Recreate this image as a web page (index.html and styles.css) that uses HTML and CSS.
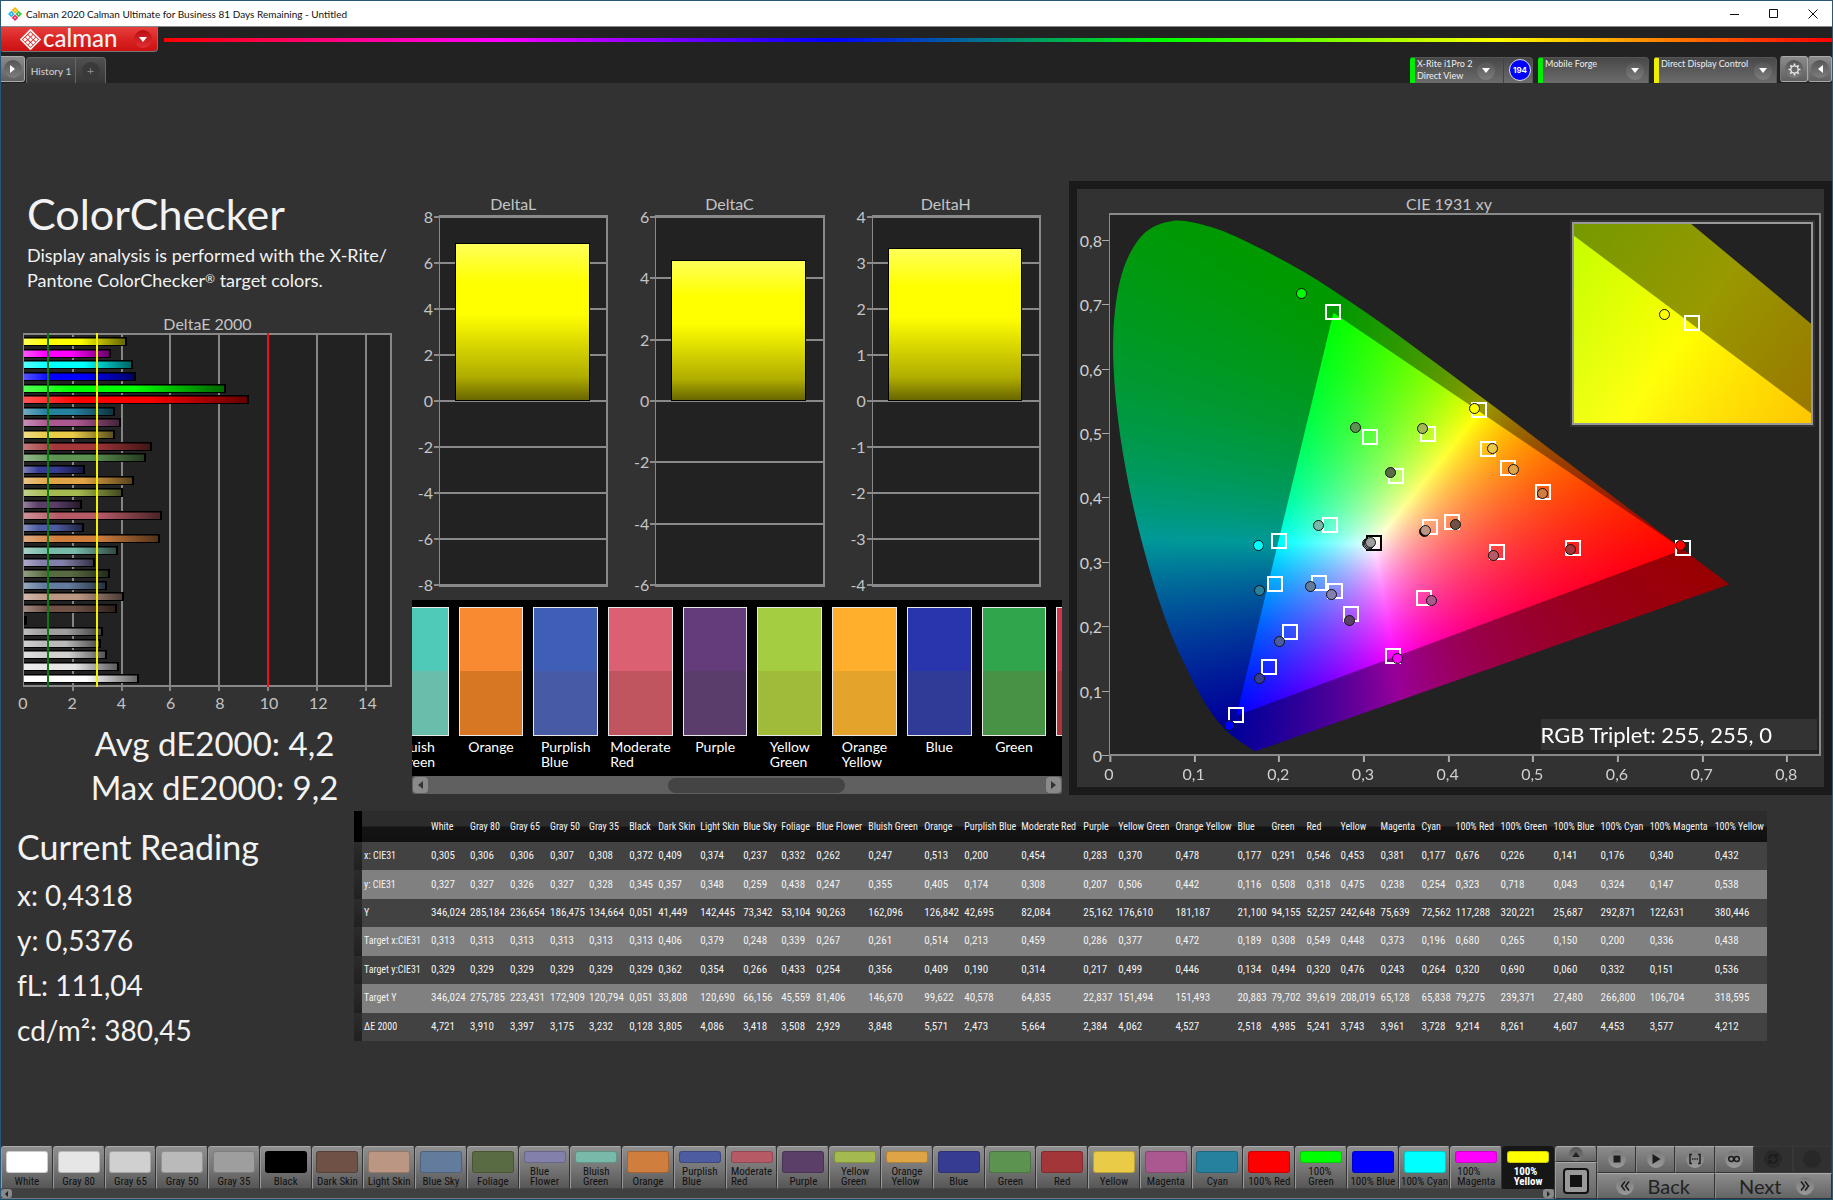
FILE: index.html
```html
<!DOCTYPE html>
<html lang="en">
<head>
<meta charset="utf-8">
<meta name="viewport" content="width=device-width, initial-scale=1">
<title>Calman 2020 Calman Ultimate for Business 81 Days Remaining - Untitled</title>
<link rel="stylesheet" href="styles.css">
</head>
<body>
<div class="titlebar">
  <svg class="app-icon" viewBox="0 0 14 14" width="14" height="14" aria-hidden="true">
    <path d="M7 0l3.300 3.300L7 6.600 3.700 3.300z" fill="#f9b800"/><path d="M3.300 3.700L6.600 7l-3.300 3.300L0 7z" fill="#1fb5ee"/>
    <path d="M10.700 3.700L14 7l-3.300 3.300L7.400 7z" fill="#3cc13b"/><path d="M7 7.400l3.300 3.300L7 14l-3.300-3.300z" fill="#ee2a62"/>
    <path d="M7 2.400l.9.9-.9.900-.9-.9zM3.300 6.100l.9.900-.9.900-.9-.9zM10.700 6.100l.9.900-.9.900-.9-.9zM7 9.800l.9.900-.9.900-.9-.9z" fill="#fff"/>
  </svg>
  <span class="window-title">Calman 2020 Calman Ultimate for Business 81 Days Remaining - Untitled</span>
  <div class="window-controls">
    <button aria-label="Minimize"><svg viewBox="0 0 10 10" width="10" height="10"><path d="M0 5.500h9"/></svg></button>
    <button aria-label="Maximize"><svg viewBox="0 0 10 10" width="10" height="10"><path d="M.5.500h8v8h-8z"/></svg></button>
    <button aria-label="Close"><svg viewBox="0 0 10 10" width="10" height="10"><path d="M.5.500l9 9M9.500.500l-9 9"/></svg></button>
  </div>
</div>

<header class="app-header">
  <div class="brand-row">
    <button class="brand" aria-label="calman menu">
      <svg viewBox="0 0 20 20" width="21" height="21" aria-hidden="true">
        <path d="M10 .8l9.200 9.200-9.200 9.200L.8 10z" fill="none" stroke="#fff" stroke-width="1.500" stroke-linejoin="round"/>
        <path d="M10 3.200l2 2-2 2-2-2zM7.400 5.800l2 2-2 2-2-2zM12.600 5.800l2 2-2 2-2-2zM4.800 8.200l2 2-2 2-2-2zM10 8.200l2 2-2 2-2-2zM15.200 8.200l2 2-2 2-2-2zM7.400 10.800l2 2-2 2-2-2zM12.600 10.800l2 2-2 2-2-2zM10 13.200l2 2-2 2-2-2z" fill="#fff"/>
      </svg>
      <span class="wordmark">calman</span>
      <span class="round round-red"><i class="tri tri-down"></i></span>
    </button>
    <div class="rainbow"></div>
  </div>
  <div class="tab-row">
    <button class="square-btn" aria-label="Expand left panel"><span class="round"><i class="tri tri-right"></i></span></button>
    <nav class="tabs">
      <button class="tab">History 1</button>
      <button class="tab tab-add" aria-label="Add tab"><span class="round round-dim">+</span></button>
    </nav>
    <div class="devices">
      <div class="device device-meter">
        <button class="device-name">X-Rite i1Pro 2<br>Direct View</button>
        <span class="round"><i class="tri tri-down"></i></span>
        <span class="badge-cell"><span class="badge">194</span></span>
      </div>
      <div class="device device-source">
        <button class="device-name">Mobile Forge</button>
        <span class="round"><i class="tri tri-down"></i></span>
      </div>
      <div class="device device-display">
        <button class="device-name">Direct Display Control</button>
        <span class="round"><i class="tri tri-down"></i></span>
      </div>
      <button class="square-btn settings" aria-label="Settings"><span class="round">
        <svg viewBox="0 0 14 14" width="13" height="13"><circle cx="7" cy="7" r="4" fill="none" stroke="#eee" stroke-width="1.400"/><path d="M7 .6v2M7 11.400v2M.6 7h2M11.400 7h2M2.500 2.500l1.400 1.400M10.100 10.100l1.400 1.400M2.500 11.500l1.400-1.400M10.100 3.900l1.400-1.400" stroke="#eee" stroke-width="1.800"/></svg>
      </span></button>
      <button class="square-btn" aria-label="Collapse right panel"><span class="round"><i class="tri tri-left"></i></span></button>
    </div>
  </div>
</header>

<main class="stage">
  <div class="overview">
    <section class="summary">
      <h1>ColorChecker</h1>
      <p class="lead">Display analysis is performed with the X-Rite/<br>Pantone ColorChecker<span class="reg">®</span> target colors.</p>
      <h2 class="chart-title">DeltaE 2000</h2>
      <div class="de-plot" id="de-plot"></div>
      <div class="de-axis" id="de-axis"></div>
      <div class="totals">
        <p>Avg dE2000: 4,2</p>
        <p>Max dE2000: 9,2</p>
      </div>
    </section>

    <section class="center">
      <div class="deltas" id="deltas"></div>
      <div class="strip">
        <div class="strip-view"><ul class="strip-list" id="strip"></ul></div>
        <div class="hscroll">
          <button aria-label="Scroll left"><i class="tri tri-left"></i></button>
          <div class="hscroll-track"><div class="hscroll-thumb"></div></div>
          <button aria-label="Scroll right"><i class="tri tri-right"></i></button>
        </div>
      </div>
    </section>

    <section class="cie">
      <h2 class="chart-title">CIE 1931 xy</h2>
      <div class="cie-grid">
        <div class="cie-y" id="cie-y"></div>
        <div class="cie-plot">
          <canvas id="cie-canvas"></canvas>
          <div class="marks" id="cie-marks"></div>
          <div class="inset"><canvas id="inset-canvas"></canvas><div class="marks" id="inset-marks"></div></div>
          <p class="triplet">RGB Triplet: 255, 255, 0</p>
        </div>
        <div class="cie-x" id="cie-x"></div>
      </div>
    </section>
  </div>

  <div class="readings">
    <section class="current">
      <h2>Current Reading</h2>
      <p>x: 0,4318</p>
      <p>y: 0,5376</p>
      <p>fL: 111,04</p>
      <p>cd/m²: 380,45</p>
    </section>
    <table class="data" id="data"></table>
  </div>
</main>

<footer class="dock">
  <div class="patches">
    <div class="patch-list" id="patches"></div>
    <div class="thin-scroll">
      <button aria-label="Previous patches"><i class="tri tri-left"></i></button>
      <span></span>
      <button aria-label="Next patches"><i class="tri tri-right"></i></button>
    </div>
  </div>
  <div class="pattern">
    <button class="pattern-up" aria-label="Show pattern options"><span class="round"><i class="tri tri-up"></i></span></button>
    <button class="pattern-window" aria-label="Pattern window"><span></span></button>
  </div>
  <div class="transport">
    <div class="transport-row">
      <button aria-label="Stop"><span class="round"><svg viewBox="0 0 12 12" width="12" height="12"><path d="M2.500 2.500h7v7h-7z"/></svg></span></button>
      <button aria-label="Play"><span class="round"><svg viewBox="0 0 12 12" width="12" height="12"><path d="M2.500 1l8 5-8 5z"/></svg></span></button>
      <button aria-label="Read series"><span class="round"><svg class="line" viewBox="0 0 12 12" width="12" height="12"><path d="M3 1.500H1v9h2M9 1.500h2v9H9M3 6h1.400M5.300 6h1.400M7.600 6H9"/></svg></span></button>
      <button aria-label="Read continuously"><span class="round"><svg class="line" viewBox="0 0 14 12" width="14" height="12"><circle cx="4.200" cy="6" r="2.500"/><circle cx="9.800" cy="6" r="2.500"/></svg></span></button>
      <button aria-label="Repeat" disabled><span class="round"><svg class="line" viewBox="0 0 12 12" width="12" height="12"><path d="M2 6a4 4 0 0 1 7-2.600M10 6a4 4 0 0 1-7 2.600"/><path d="M9.800 1v3H7M2.200 11V8H5"/></svg></span></button>
      <button aria-label="Unavailable" disabled><span class="round"></span></button>
    </div>
    <div class="nav-row">
      <button class="nav-back"><span class="round"><svg class="line" viewBox="0 0 12 12" width="12" height="12"><path d="M6 1.500L2.500 6 6 10.500M10 1.500L6.500 6l3.500 4.500"/></svg></span>Back</button>
      <button class="nav-next">Next<span class="round"><svg class="line" viewBox="0 0 12 12" width="12" height="12"><path d="M2 1.500L5.500 6 2 10.500M6 1.500L9.500 6 6 10.500"/></svg></span></button>
    </div>
  </div>
</footer>
<script src="script.js"></script>
</body>
</html>
```
FILE: styles.css
```css
* { box-sizing: border-box; margin: 0; padding: 0; }
body {
  min-height: 100vh;
  display: flex;
  flex-direction: column;
  background: #323232;
  color: #f2f2f2;
  font: 16px/20px Lato, "Open Sans", sans-serif;
  border: 1px solid #2b5876;
  border-bottom-color: #14506a;
  overflow-x: hidden;
}
button { font: inherit; color: inherit; border: 0; background: none; }
svg { display: block; }
ul { list-style: none; }

/* Shared round glyph holders and triangles */
.round {
  flex: none;
  display: flex;
  align-items: center;
  justify-content: center;
  width: 18px;
  height: 18px;
  border-radius: 50%;
  background: linear-gradient(#555, #7d7d7d);
}
.tri { flex: none; width: 0; height: 0; border: 4px solid transparent; }
.tri-down { border-top: 5px solid #fff; border-bottom: 0; }
.tri-up { border-bottom: 5px solid #222; border-top: 0; }
.tri-right { border-left: 5px solid #fff; border-right: 0; }
.tri-left { border-right: 5px solid #fff; border-left: 0; }

/* Window title bar */
.titlebar {
  display: flex;
  align-items: center;
  height: 26px;
  padding-left: 7px;
  background: #fff;
  color: #111;
  border-bottom: 1px solid #8a8a8a;
}
.window-title { margin-left: 4px; font-size: 10px; line-height: 20px; }
.window-controls { display: flex; margin-left: auto; }
.window-controls button { width: 39px; height: 24px; display: flex; align-items: center; justify-content: center; }
.window-controls path { fill: none; stroke: #111; }

/* Application header */
.app-header { background: #222; }
.brand-row { display: flex; align-items: center; height: 26px; }
.brand {
  align-self: flex-start;
  display: flex;
  align-items: center;
  width: 157px;
  height: 25px;
  padding: 0 5px 0 19px;
  background: linear-gradient(#e5403d, #d81f1f 60%, #cc1212);
  border-bottom: 1px solid #777;
  border-right: 1px solid #777;
  border-radius: 0 0 4px 2px;
}
.wordmark { margin-left: 2px; font-size: 24px; line-height: 20px; font-weight: 500; padding-bottom: 3px; }
.round-red { margin-left: auto; background: linear-gradient(#b90f12, #e03034); }
.rainbow {
  flex: 1;
  height: 4px;
  margin: 0 0 0 6px;
  background: linear-gradient(90deg, #f00, #f0f, #00f, #0f0, #ff0, #f00);
}
.tab-row { display: flex; align-items: flex-end; height: 30px; }
.square-btn {
  display: flex;
  align-items: center;
  justify-content: center;
  width: 24px;
  height: 26px;
  margin-bottom: 1px;
  background: linear-gradient(#8b8b8b, #606060);
  border: 1px solid #aaa;
  border-left-color: #777;
  border-radius: 3px;
}
.square-btn:first-child { border-left: 0; border-radius: 0 3px 3px 0; }
.settings { width: 28px; }
.tabs { display: flex; margin-left: 1px; }
.tab {
  height: 26px;
  width: 50px;
  font-size: 10px;
  font-weight: 500;
  color: #ccc;
  background: linear-gradient(#505050, #363636);
  border: 1px solid #666;
  border-bottom: 0;
  border-radius: 4px 0 0 0;
}
.tab-add { width: 30px; border-radius: 0 4px 0 0; display: flex; align-items: center; justify-content: center; border-left: 0; }
.round-dim { background: #3a3a3a; color: #888; font-size: 12px; }
.devices { display: flex; margin-left: auto; align-items: flex-end; }
.device {
  display: flex;
  align-items: center;
  height: 26px;
  margin-right: 5px;
  padding-right: 4px;
  font-size: 9px;
  line-height: 12px;
  color: #eee;
  background: linear-gradient(#484848, #6c6c6c);
  border: 1px solid #555;
  border-width: 1px 1px 0 5px;
  border-radius: 3px 4px 0 0;
}
.device-name { flex: 1; align-self: flex-start; text-align: left; padding-left: 2px; white-space: nowrap; }
.device-meter { width: 123px; border-left-color: #0e0; padding-right: 0; }
.device-source { width: 111px; border-left-color: #0e0; }
.device-display { width: 123px; border-left-color: #ee0; margin-right: 3px; }
.badge-cell { height: 25px; margin-left: 8px; padding: 1px 1px 0 5px; border-left: 1px solid #444; }
.badge {
  display: block;
  width: 22px;
  height: 22px;
  border: 1px solid #ddd;
  border-radius: 50%;
  background: #00f;
  color: #fff;
  font: bold 8px/20px Inter, sans-serif;
  text-align: center;
}

/* Main stage */
.stage { flex: 1; padding-top: 98px; }
.overview { display: grid; grid-template-columns: 403fr 658fr 770fr; }
.chart-title { font-size: 16px; line-height: 19px; font-weight: 400; color: #c4c4c4; text-align: center; }
.summary { padding: 7px 12px 2px 22px; }
.summary h1 { margin-left: 4px; font-size: 43px; line-height: 52px; font-weight: 400; white-space: nowrap; }
.lead { margin: 3px 0 21px 4px; font-size: 18px; line-height: 25px; white-space: nowrap; }
.reg { font-size: 12px; line-height: 12px; vertical-align: 4px; }

.de-plot { position: relative; height: 354px; padding: 1px 0; background: #222; border: 2px solid #888; border-left-width: 1px; display: flex; flex-direction: column; }
.de-row { flex: 1; display: flex; align-items: center; z-index: 1; }
.de-bar { height: 9px; border: 1px solid #000; border-width: 1px 2px 1px 0; box-shadow: inset 0 1px 0 #0008; }
.de-line { position: absolute; top: 0; bottom: 0; width: 2px; margin-left: -1px; background: #858585; }
.de-line.tick { bottom: -6px; }
.limit { z-index: 2; top: -2px; bottom: -2px; }
.limit-low { background: #0a7a12; }
.limit-mid { background: #f1f100; }
.limit-high { background: #f01018; }
.de-axis { position: relative; height: 26px; }
.de-axis span { position: absolute; top: 6px; transform: translateX(-50%); color: #c4c4c4; }
.totals { margin-top: 8px; padding-left: 14px; text-align: center; font-size: 33px; line-height: 44px; white-space: nowrap; }

.deltas { display: grid; grid-template-columns: repeat(3, 1fr); padding: 13px 8px 0 1px; }
.delta-plot { position: relative; height: 372px; margin: 2px 13px 0 34px; background: #222; border: 2px solid #8a8a8a; border-left-width: 1px; }
.delta-line { position: absolute; left: -6px; right: 0; height: 2px; margin-top: -1px; background: #8a8a8a; }
.delta-label { position: absolute; right: 100%; margin: -10px 7px 0 0; color: #c4c4c4; }
.delta-bar {
  position: absolute;
  left: 9%;
  right: 10%;
  border: 1px solid #000;
  background: linear-gradient(#ffff58, #ff0 25%, #ff0 45%, #b0ad00 85%, #686600);
}

.strip { margin: 13px 0 0 8px; }
.strip-view { height: 176px; padding-top: 7px; background: #000; overflow: hidden; }
.strip-list { display: grid; grid-template-columns: repeat(10, 1fr); gap: 10px; margin: 0 -59px 0 -28px; }
.strip-list li { display: flex; flex-direction: column; align-items: center; gap: 3px; font-size: 14px; line-height: 15px; color: #fff; }
.strip-color { width: 100%; height: 129px; border: 1px solid #e8e8e8; }
.hscroll { display: flex; align-items: center; height: 18px; padding: 1px; background: #606060; border-radius: 3px; }
.hscroll button { width: 15px; height: 16px; display: flex; align-items: center; justify-content: center; background: #8a8a8a; border-radius: 4px; }
.hscroll .tri-left { border-right-color: #333; }
.hscroll .tri-right { border-left-color: #333; }
.hscroll-track { flex: 1; padding: 0 31% 0 37%; }
.hscroll-thumb { height: 15px; border-radius: 8px; background: #444; }

/* Chromaticity diagram */
.cie { align-self: start; margin-left: 7px; padding: 5px 3px 3px 0; border: 8px solid #1a1a1a; }
.cie-grid { display: grid; grid-template-columns: 32px 1fr; }
.cie-y, .cie-x { position: relative; color: #d0d0d0; }
.cie-x { grid-column: 2; height: 28px; }
.cie-y span { position: absolute; right: 7px; margin-bottom: -10px; }
.cie-y span::after { content: ""; position: absolute; left: 100%; top: 9px; width: 7px; height: 1px; background: #aaa; }
.cie-x span { position: absolute; top: 8px; transform: translateX(-50%); }
.cie-x span::before { content: ""; position: absolute; left: 50%; top: -8px; width: 2px; height: 6px; background: #aaa; }
.cie-plot { position: relative; height: 543px; background: #222; border: 2px solid #8a8a8a; border-left-width: 1px; }
.cie-plot canvas { position: absolute; left: 0; top: 0; width: 100%; height: 100%; display: block; }
.marks { position: absolute; inset: 0; }
.target, .measured { position: absolute; width: 16px; height: 16px; margin: 0 0 -7px -8px; border: 2px solid #fff; }
.target-white { border-color: #000; }
.measured { width: 11px; height: 11px; margin: 0 0 -4px -5px; border: 1px solid #111; border-radius: 50%; }
.inset { position: absolute; right: 6px; top: 7px; width: 34%; height: 203px; border: 2px solid #999; box-shadow: 0 0 0 2px #333; background: #222; overflow: hidden; }
.triplet { position: absolute; right: 2px; bottom: 4px; width: 39%; height: 31px; background: #333; color: #fff; font-size: 22px; line-height: 31px; white-space: nowrap; }

/* Lower readings */
.readings { display: grid; grid-template-columns: 353fr 1413fr 65fr; align-items: start; }
.current { padding: 13px 0 0 16px; font-size: 28px; line-height: 45px; white-space: nowrap; }
.current h2 { margin-bottom: 4px; font-size: 34px; line-height: 45px; font-weight: 400; }
.data { width: 100%; height: 230px; table-layout: fixed; border-collapse: collapse; font: 11px/14px "Roboto Condensed", Lato, sans-serif; white-space: nowrap; }
.data th, .data td { text-align: left; font-weight: inherit; padding: 0; }
.data thead tr { height: 31px; font-size: 10px; background: linear-gradient(#2c2c2c 48%, #141414 52%, #101010); }
.data tbody tr { background: #424242; }
.data tbody tr:nth-child(even) { background: #808080; }
.data td:first-child { background: linear-gradient(#2c2c2c, #202020); }
.data thead td:first-child { background: #000; }
.data tbody th { padding-left: 2px; font-size: 10px; }

/* Bottom dock */
.dock { display: flex; height: 53px; }
.patches { flex: 1; min-width: 0; display: flex; flex-direction: column; }
.patch-list { flex: 1; display: flex; }
.patch {
  flex: 1 1 0;
  min-width: 0;
  display: flex;
  flex-direction: column;
  align-items: center;
  gap: 4px;
  padding: 4px 0 1px;
  font: 11px/10px "Roboto Condensed", Lato, sans-serif;
  text-align: left;
  white-space: nowrap;
  color: #111;
  background: linear-gradient(#8e8e8e, #777 50%, #565656);
  border: 1px solid #999;
  border-color: #aaa #333 #444 #999;
  border-radius: 3px 3px 0 0;
}
.patch-color { flex: 1; width: 42px; border-radius: 3px; border: 1px solid #0003; }
.patch-active { background: #161616; border-color: #161616; color: #fff; font-weight: 700; }
.thin-scroll { display: flex; height: 10px; background: #404040; border-bottom: 1px solid #777; }
.thin-scroll span { flex: 1; }
.thin-scroll button { width: 11px; display: flex; align-items: center; justify-content: center; background: #888; border-radius: 3px; }
.thin-scroll .tri { border-width: 3px; border-left-color: transparent; border-right-color: transparent; }
.thin-scroll .tri-left { border-right-color: #222; border-left-width: 0; }
.thin-scroll .tri-right { border-left-color: #222; border-right-width: 0; }
.pattern { width: 42px; margin-left: 1px; display: flex; flex-direction: column; }
.pattern button { display: flex; align-items: center; justify-content: center; background: linear-gradient(#8a8a8a, #666); border: 1px solid #aaa; border-color: #aaa #333 #333 #999; }
.pattern-up { height: 16px; border-radius: 3px 3px 0 0; }
.pattern-up .round { width: 14px; height: 14px; }
.pattern-window { flex: 1; }
.pattern-window span { width: 26px; height: 26px; border: 2px solid #111; border-radius: 4px; background: linear-gradient(#111, #111) center / 12px 12px no-repeat #999; }
.transport { width: 235px; display: flex; flex-direction: column; }
.transport-row, .nav-row { flex: 1; display: flex; }
.transport button { flex: 1 1 0; min-width: 0; display: flex; align-items: center; justify-content: center; color: #222; background: linear-gradient(#8c8c8c, #646464); border: 1px solid #999; border-color: #aaa #333 #333 #888; }
.transport .round { background: linear-gradient(#787878, #9a9a9a); }
.transport button:disabled { background: #303030; border-color: #383838; }
.transport button:disabled .round { background: #282828; }
.transport svg { fill: #1c1c1c; }
.transport svg.line { fill: none; stroke: #1c1c1c; stroke-width: 1.5; }
.nav-row .nav-back { font-size: 20px; line-height: 22px; gap: 14px; padding-right: 6px; }
.nav-row .nav-next { font-size: 20px; line-height: 22px; gap: 14px; padding-left: 6px; }
```
FILE: script.js
```js
const patches = [
  // name, colour, x, y, Y, target x, target y, target Y, dE2000, table column width
  ["White", "#ffffff", "0,305", "0,327", "346,024", "0,313", "0,329", "346,024", "4,721", 39],
  ["Gray 80", "#e6e6e6", "0,306", "0,327", "285,184", "0,313", "0,329", "275,785", "3,910", 40],
  ["Gray 65", "#d0d0d0", "0,306", "0,326", "236,654", "0,313", "0,329", "223,431", "3,397", 40],
  ["Gray 50", "#bababa", "0,307", "0,327", "186,475", "0,313", "0,329", "172,909", "3,175", 39],
  ["Gray 35", "#9e9e9e", "0,308", "0,328", "134,664", "0,313", "0,329", "120,794", "3,232", 40],
  ["Black", "#000000", "0,372", "0,345", "0,051", "0,313", "0,329", "0,051", "0,128", 29],
  ["Dark Skin", "#6f5145", "0,409", "0,357", "41,449", "0,406", "0,362", "33,808", "3,805", 42],
  ["Light Skin", "#bb9682", "0,374", "0,348", "142,445", "0,379", "0,354", "120,690", "4,086", 43],
  ["Blue Sky", "#637b9c", "0,237", "0,259", "73,342", "0,248", "0,266", "66,156", "3,418", 38],
  ["Foliage", "#596b42", "0,332", "0,438", "53,104", "0,339", "0,433", "45,559", "3,508", 35],
  ["Blue Flower", "#8480ac", "0,262", "0,247", "90,263", "0,267", "0,254", "81,406", "2,929", 52],
  ["Bluish Green", "#78baa9", "0,247", "0,355", "162,096", "0,261", "0,356", "146,670", "3,848", 56],
  ["Orange", "#cf7e3e", "0,513", "0,405", "126,842", "0,514", "0,409", "99,622", "5,571", 40],
  ["Purplish Blue", "#4d5ba1", "0,200", "0,174", "42,695", "0,213", "0,190", "40,578", "2,473", 57],
  ["Moderate Red", "#b65b66", "0,454", "0,308", "82,084", "0,459", "0,314", "64,835", "5,664", 62],
  ["Purple", "#5b3f69", "0,283", "0,207", "25,162", "0,286", "0,217", "22,837", "2,384", 35],
  ["Yellow Green", "#a4ba50", "0,370", "0,506", "176,610", "0,377", "0,499", "151,494", "4,062", 57],
  ["Orange Yellow", "#dfa445", "0,478", "0,442", "181,187", "0,472", "0,446", "151,493", "4,527", 62],
  ["Blue", "#373c93", "0,177", "0,116", "21,100", "0,189", "0,134", "20,883", "2,518", 34],
  ["Green", "#5c9350", "0,291", "0,508", "94,155", "0,308", "0,494", "79,702", "4,985", 35],
  ["Red", "#a23639", "0,546", "0,318", "52,257", "0,549", "0,320", "39,619", "5,241", 34],
  ["Yellow", "#e9cb48", "0,453", "0,475", "242,648", "0,448", "0,476", "208,019", "3,743", 40],
  ["Magenta", "#ab5790", "0,381", "0,238", "75,639", "0,373", "0,243", "65,128", "3,961", 41],
  ["Cyan", "#26819f", "0,177", "0,254", "72,562", "0,196", "0,264", "65,838", "3,728", 34],
  ["100% Red", "#ff0000", "0,676", "0,323", "117,288", "0,680", "0,320", "79,275", "9,214", 45],
  ["100% Green", "#00ff00", "0,226", "0,718", "320,221", "0,265", "0,690", "239,371", "8,261", 53],
  ["100% Blue", "#0000ff", "0,141", "0,043", "25,687", "0,150", "0,060", "27,480", "4,607", 47],
  ["100% Cyan", "#00ffff", "0,176", "0,324", "292,871", "0,200", "0,332", "266,800", "4,453", 49],
  ["100% Magenta", "#ff00ff", "0,340", "0,147", "122,631", "0,336", "0,151", "106,704", "3,577", 65],
  ["100% Yellow", "#ffff00", "0,432", "0,538", "380,446", "0,438", "0,536", "318,595", "4,212", 52]
];
const num = s => parseFloat(s.replace(",", "."));
const byId = id => document.getElementById(id);

// DeltaE bar chart, axis 0 to 15
const AXIS = 15;
byId("de-plot").innerHTML =
  [2, 4, 6, 8, 10, 12, 14].map(v => `<i class="de-line tick" style="left:${v / AXIS * 100}%"></i>`).join("") +
  patches.slice().reverse().map(p => `<div class="de-row"><div class="de-bar" style="width:${num(p[8]) / AXIS * 100}%;background:linear-gradient(90deg,#fff5,#fff0 25%,#0000 55%,#0009),${p[1]}"></div></div>`).join("") +
  [["low", 1], ["mid", 3], ["high", 10]].map(([n, v]) => `<i class="de-line limit limit-${n}" style="left:${v / AXIS * 100}%"></i>`).join("");
byId("de-axis").innerHTML = [0, 2, 4, 6, 8, 10, 12, 14].map(v => `<span style="left:${v / AXIS * 100}%">${v}</span>`).join("");

// DeltaL, DeltaC and DeltaH
byId("deltas").innerHTML = [["DeltaL", 8, 2, 6.86], ["DeltaC", 6, 2, 4.61], ["DeltaH", 4, 1, 3.33]].map(([name, max, step, value]) => {
  let marks = "";
  for (let v = max; v >= -max; v -= step) {
    const top = (max - v) / (2 * max) * 100;
    marks += `<i class="delta-line" style="top:${top}%"></i><span class="delta-label" style="top:${top}%">${v}</span>`;
  }
  return `<section><h2 class="chart-title">${name}</h2><div class="delta-plot">${marks}<div class="delta-bar" style="top:${(max - value) / (2 * max) * 100}%;bottom:50%"></div></div></section>`;
}).join("");

// Measured over target swatches; the last one is only a sliver, so it carries no label
byId("strip").innerHTML = [
  ["Bluish<br>Green", "#4fcab8", "#68bdab"], ["Orange", "#f98a31", "#d87723"], ["Purplish<br>Blue", "#3f5eb5", "#465ba4"],
  ["Moderate<br>Red", "#db6072", "#c0545f"], ["Purple", "#653c7b", "#5b3d6b"], ["Yellow<br>Green", "#a4cd42", "#a0bb3a"],
  ["Orange<br>Yellow", "#ffaf2b", "#e4a32b"], ["Blue", "#2935ac", "#303a97"], ["Green", "#31a54b", "#479244"], ["", "#d0344a", "#b0333a"]
].map(([n, a, b]) => `<li><div class="strip-color" style="background:linear-gradient(${a} 50%,${b} 50%)"></div><span>${n}</span></li>`).join("");

// Data table
const rows = ["x: CIE31", "y: CIE31", "Y", "Target x:CIE31", "Target y:CIE31", "Target Y", "ΔE 2000"];
byId("data").innerHTML =
  `<colgroup><col style="width:8px"><col style="width:69px">${patches.map(p => `<col style="width:${p[9]}px">`).join("")}</colgroup>` +
  `<thead><tr><td></td><td></td>${patches.map(p => `<th scope="col">${p[0]}</th>`).join("")}</tr></thead><tbody>` +
  rows.map((r, i) => `<tr><td></td><th scope="row">${r}</th>${patches.map(p => `<td>${p[i + 2]}</td>`).join("")}</tr>`).join("") + "</tbody>";

// Patch selector
const wrapped = ["Blue Flower", "Bluish Green", "Purplish Blue", "Moderate Red", "Yellow Green", "Orange Yellow", "100% Green", "100% Magenta", "100% Yellow"];
byId("patches").innerHTML = patches.map((p, i) =>
  `<button class="patch${i === patches.length - 1 ? " patch-active" : ""}"><span class="patch-color" style="background:${p[1]}"></span><span>${wrapped.includes(p[0]) ? p[0].replace(" ", "<br>") : p[0]}</span></button>`).join("");

// Chromaticity diagram
const R = [0.68, 0.32], G = [0.265, 0.69], B = [0.15, 0.06], W = [0.3127, 0.329];
const locus = [[.1741, .005], [.1714, .0051], [.1689, .0069], [.1644, .0109], [.1566, .0177], [.144, .0297], [.1355, .0399], [.1241, .0578], [.1096, .0868], [.0913, .1327], [.0687, .2007], [.0454, .295], [.0235, .4127], [.0082, .5384], [.0039, .6548], [.0139, .7502], [.0389, .812], [.0743, .8338], [.1142, .8262], [.1547, .8059], [.2296, .7543], [.3016, .6923], [.3731, .6245], [.4441, .5547], [.5125, .4866], [.5752, .4242], [.627, .3725], [.6915, .3083], [.7347, .2653]];

function invert(m) {
  const [a, b, c, d, e, f, g, h, i] = m;
  const det = a * (e * i - f * h) - b * (d * i - f * g) + c * (d * h - e * g);
  return [e * i - f * h, c * h - b * i, b * f - c * e, f * g - d * i, a * i - c * g, c * d - a * f, d * h - e * g, b * g - a * h, a * e - b * d].map(v => v / det);
}
const xyz = (x, y) => [x, y, 1 - x - y];
const mul = (m, v) => [0, 3, 6].map(k => m[k] * v[0] + m[k + 1] * v[1] + m[k + 2] * v[2]);
const r = xyz(...R), g = xyz(...G), b = xyz(...B);
const toPrimaries = invert([r[0], g[0], b[0], r[1], g[1], b[1], r[2], g[2], b[2]]);
const white = mul(toPrimaries, xyz(...W).map(v => v / W[1]));

function drawDiagram(canvas, x0, x1, y0, y1) {
  const w = canvas.width = canvas.clientWidth, h = canvas.height = canvas.clientHeight;
  const ctx = canvas.getContext("2d");
  const px = (x, y) => [(x - x0) / (x1 - x0) * w, (y1 - y) / (y1 - y0) * h];
  const layer = gain => {
    const off = document.createElement("canvas");
    off.width = w; off.height = h;
    const octx = off.getContext("2d"), img = octx.createImageData(w, h);
    for (let j = 0, k = 0; j < h; j++) for (let i = 0; i < w; i++, k += 4) {
      const c = mul(toPrimaries, xyz(x0 + i / w * (x1 - x0), y1 - j / h * (y1 - y0))).map((v, n) => Math.max(0, v / white[n]));
      const max = Math.max(...c);
      for (let n = 0; n < 3; n++) img.data[k + n] = 255 * gain * c[n] / max;
      img.data[k + 3] = 255;
    }
    octx.putImageData(img, 0, 0);
    return off;
  };
  ctx.save();
  ctx.beginPath();
  const pts = locus.map(p => px(...p));
  ctx.moveTo(...pts[0]);
  for (let i = 0; i < pts.length - 1; i++) {
    const p0 = pts[Math.max(0, i - 1)], p1 = pts[i], p2 = pts[i + 1], p3 = pts[Math.min(pts.length - 1, i + 2)];
    ctx.bezierCurveTo(p1[0] + (p2[0] - p0[0]) / 6, p1[1] + (p2[1] - p0[1]) / 6, p2[0] - (p3[0] - p1[0]) / 6, p2[1] - (p3[1] - p1[1]) / 6, p2[0], p2[1]);
  }
  ctx.closePath();
  ctx.clip();
  ctx.drawImage(layer(0.6), 0, 0);
  ctx.restore();
  ctx.save();
  ctx.beginPath();
  [R, G, B].forEach(p => ctx.lineTo(...px(...p)));
  ctx.closePath();
  ctx.clip();
  ctx.drawImage(layer(1), 0, 0);
  ctx.restore();
}

const XMAX = 0.841, YMAX = 0.843;
function place(x, y, x0, x1, y0, y1) {
  return `left:${(x - x0) / (x1 - x0) * 100}%;bottom:${(y - y0) / (y1 - y0) * 100}%`;
}
function markers(list, ...range) {
  return list.map(p => `<i class="target${p[5] === "0,313" ? " target-white" : ""}" style="${place(num(p[5]), num(p[6]), ...range)}"></i>`).join("") +
    list.map(p => `<i class="measured" style="${place(num(p[2]), num(p[3]), ...range)};background:${p[1]}"></i>`).join("");
}
const full = [0, XMAX, 0, YMAX], near = [0.413, 0.463, 0.511, 0.561];
const order = [patches[5], ...patches.filter((p, i) => i !== 5)];
byId("cie-marks").innerHTML = markers(order, ...full);
byId("inset-marks").innerHTML = markers(patches.slice(-1), ...near);
const label = v => v ? v.toFixed(1).replace(".", ",") : "0";
const ticks = [0, .1, .2, .3, .4, .5, .6, .7, .8];
byId("cie-x").innerHTML = ticks.map(v => `<span style="left:${v / XMAX * 100}%">${label(v)}</span>`).join("");
byId("cie-y").innerHTML = ticks.map(v => `<span style="bottom:${v / YMAX * 100}%">${label(v)}</span>`).join("");

function render() {
  drawDiagram(byId("cie-canvas"), ...full);
  drawDiagram(byId("inset-canvas"), ...near);
}
render();
window.addEventListener("resize", render);
```
